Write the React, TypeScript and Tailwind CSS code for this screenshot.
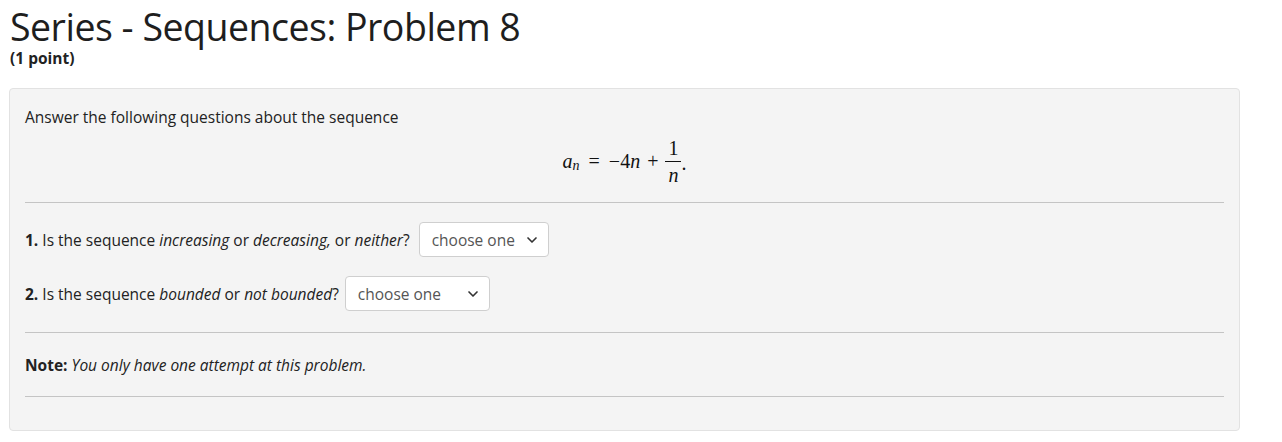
import { ChevronDown } from "lucide-react";

function Choose({ width, gap }: { width: string; gap: string }) {
  return (
    <span
      className={`inline-flex h-[35px] items-center justify-between rounded-[4px] border border-[#cfcfcf] bg-white pl-3 pr-2 align-middle text-[15.5px] text-[#555] ${gap} ${width}`}
    >
      <span>choose one</span>
      <ChevronDown className="h-4 w-4 text-[#333]" strokeWidth={2.5} />
    </span>
  );
}

export default function App() {
  return (
    <div className="min-h-[442px] bg-white font-['Open_Sans',sans-serif] text-[#222]">
      <div className="px-[10px] pt-[4px]">
        <h1 className="text-[37.5px] leading-[46px] font-normal tracking-[-0.5px] text-[#1e1e1e]">
          Series - Sequences: Problem 8
        </h1>
        <p className="text-[15.5px] leading-[16px] font-bold">(1 point)</p>
      </div>

      <div className="mt-[22px] ml-[9px] w-[1231px] rounded-[4px] border border-[#e2e2e2] bg-[#f4f4f4] px-[15px] pt-[17px] pb-[33px] text-[15.5px]">
        <p className="leading-[22px]">Answer the following questions about the sequence</p>

        <div className="flex h-[66px] items-center justify-center font-['Liberation_Serif',serif] text-[20px] text-[#111]">
          <span className="italic">a</span>
          <span className="mt-[8px] text-[14px] italic">n</span>
          <span className="mx-[9px]">=</span>
          <span>−4</span>
          <span className="italic">n</span>
          <span className="mx-[7px]">+</span>
          <span className="inline-flex flex-col items-center leading-[22px]">
            <span className="px-[2px]">1</span>
            <span className="my-[2px] h-px w-[16px] bg-[#111]" />
            <span className="italic">n</span>
          </span>
          <span className="mt-[4px]">.</span>
        </div>

        <hr className="mt-[8px] border-0 border-t border-[#c4c4c4]" />

        <div className="mt-[19px] flex items-center leading-[22px]">
          <span>
            <b>1.</b> Is the sequence <i>increasing</i> or <i>decreasing,</i> or <i>neither</i>?
          </span>
          <Choose width="w-[130px]" gap="ml-[9px]" />
        </div>

        <div className="mt-[19px] flex items-center leading-[22px]">
          <span>
            <b>2.</b> Is the sequence <i>bounded</i> or <i>not bounded</i>?
          </span>
          <Choose width="w-[145px]" gap="ml-[6px]" />
        </div>

        <hr className="mt-[21px] border-0 border-t border-[#c4c4c4]" />

        <p className="mt-[21px] leading-[22px]">
          <b>Note:</b> <i>You only have one attempt at this problem.</i>
        </p>

        <hr className="mt-[20px] border-0 border-t border-[#c4c4c4]" />
      </div>
    </div>
  );
}
